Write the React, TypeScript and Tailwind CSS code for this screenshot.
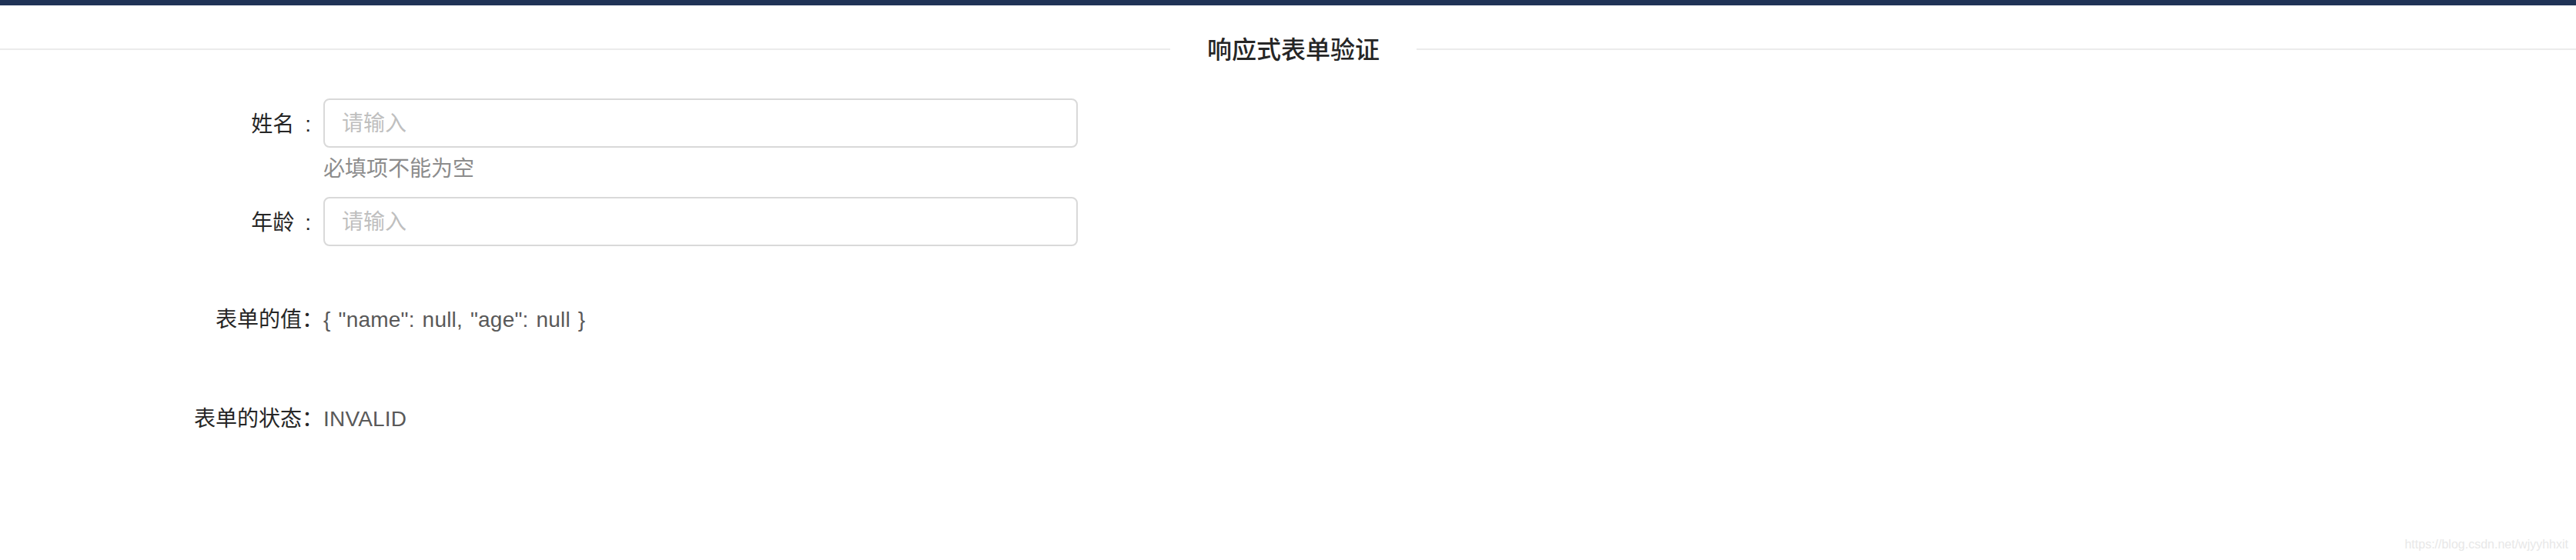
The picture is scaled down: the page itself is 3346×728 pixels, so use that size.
import type { FC } from "react";

const font = "font-['Liberation_Sans','Noto_Sans_CJK_SC',sans-serif]";

type FieldProps = {
  label: string;
  error?: string;
};

const Field: FC<FieldProps> = ({ label, error }) => (
  <div>
    <div className="flex items-center h-[64px]">
      <div className="w-[420px] pt-[4px] flex justify-end items-center text-[28px] text-[#262626]">
        <span>{label}</span>
        <span className="ml-[14px] mr-[16px]">:</span>
      </div>
      <input
        className="w-[980px] h-[64px] border-2 border-[#d9d9d9] rounded-[8px] px-[22px] pt-[2px] text-[28px] text-[#262626] placeholder:text-[#bfbfbf] outline-none"
        placeholder="请输入"
      />
    </div>
    {error && (
      <div className="pl-[420px] mt-[6px] h-[44px] leading-[44px] text-[28px] text-[#8c8c8c]">
        {error}
      </div>
    )}
  </div>
);

const InfoRow: FC<{ label: string; value: string; className?: string }> = ({
  label,
  value,
  className,
}) => (
  <div className={`flex items-center h-[64px] pt-[4px] text-[28px] ${className ?? ""}`}>
    <div className="w-[420px] text-right text-[#262626]">{label}：</div>
    <div className="text-[#595959] [word-spacing:2px] tracking-[0.2px]">{value}</div>
  </div>
);

export default function App() {
  return (
    <div className={`relative min-h-[728px] bg-white ${font}`}>
      <div className="h-[7px] bg-[#203356]" />

      {/* divider title */}
      <div className="flex items-center h-[113px]">
        <div className="w-[1520px] h-[2px] bg-[#ebebeb]" />
        <div className="px-[48px] pt-[2px] text-[32px] font-medium text-[#262626] leading-none">
          响应式表单验证
        </div>
        <div className="flex-1 h-[2px] bg-[#ebebeb]" />
      </div>

      <form className="pt-[8px]">
        <Field label="姓名" error="必填项不能为空" />
        <div className="mt-[14px]">
          <Field label="年龄" />
        </div>
        <InfoRow className="mt-[62px]" label="表单的值" value={'{ "name": null, "age": null }'} />
        <InfoRow className="mt-[65px]" label="表单的状态" value="INVALID" />
      </form>

      <div className="absolute right-[10px] bottom-[8px] text-[16px] text-[#e8e8e8]">
        https://blog.csdn.net/wjyyhhxit
      </div>
    </div>
  );
}
